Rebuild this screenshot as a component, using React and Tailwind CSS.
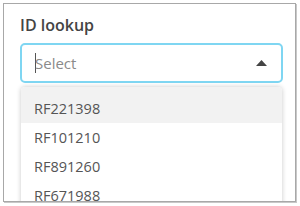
export default function App() {
  const items = ["RF221398", "RF101210", "RF891260", "RF671988"];
  return (
    <div className="w-[300px] h-[206px] bg-white pt-[3px] pl-[3px]" style={{ fontFamily: '"Open Sans", sans-serif' }}>
      <div className="w-[293px] h-[199px] border border-[#a8a8a8] shadow-[1px_1px_0_#c8c8c8] overflow-hidden pl-[16px] pt-[11px]">
        <div className="text-[16px] font-semibold text-[#444] leading-[20px]">ID lookup</div>
        <div className="mt-[8px] w-[263px] h-[40px] border-2 border-[#7fd6f2] rounded-[5px] flex items-center pl-[13px] pr-[14px]">
          <span className="w-px h-[20px] bg-[#555]"></span>
          <span className="text-[15px] text-[#8a8a8a] -ml-px">Select</span>
          <svg className="ml-auto" width="11" height="6" viewBox="0 0 11 6">
            <path d="M0 6 L5.5 0 L11 6 Z" fill="#444" />
          </svg>
        </div>
        <div className="mt-[4px] ml-[1px] w-[261px] rounded-t-[4px] bg-white shadow-[0_0_5px_rgba(0,0,0,0.22)]">
          {items.map((it, i) => (
            <div
              key={it}
              className={`${i === 0 ? "h-[36px] pt-[7px] bg-[#f2f2f2] rounded-t-[4px]" : "h-[29px]"} flex items-center pl-[13px] text-[14.5px] text-[#555]`}
            >
              {it}
            </div>
          ))}
        </div>
      </div>
    </div>
  );
}
